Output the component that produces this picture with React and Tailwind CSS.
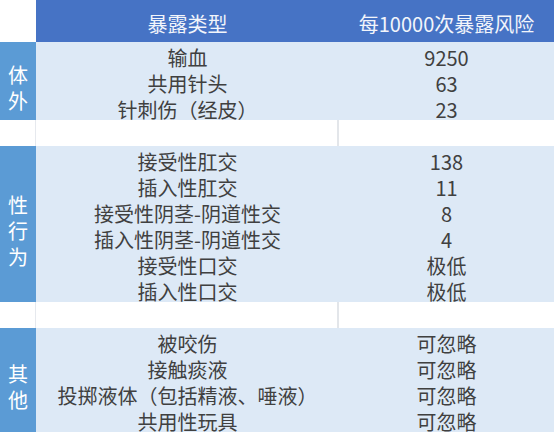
import React from 'react';

const sections = [
    {
        label: ['体', '外'],
        rows: [
            ['输血', '9250'],
            ['共用针头', '63'],
            ['针刺伤（经皮）', '23'],
        ],
    },
    {
        label: ['性', '行', '为'],
        rows: [
            ['接受性肛交', '138'],
            ['插入性肛交', '11'],
            ['接受性阴茎-阴道性交', '8'],
            ['插入性阴茎-阴道性交', '4'],
            ['接受性口交', '极低'],
            ['插入性口交', '极低'],
        ],
    },
    {
        label: ['其', '他'],
        rows: [
            ['被咬伤', '可忽略'],
            ['接触痰液', '可忽略'],
            ['投掷液体（包括精液、唾液）', '可忽略'],
            ['共用性玩具', '可忽略'],
        ],
    },
];

function Spacer() {
    return (
        <div className="flex h-[26px] bg-white">
            <div className="w-[36px] border-r border-[#e6e9ee]" />
            <div className="w-[303px] border-r-2 border-[#e3e6ea]" />
            <div className="flex-1" />
        </div>
    );
}

export default function App() {
    return (
        <div
            className="w-[554px] h-[432px] overflow-hidden bg-white text-[#404040]"
            style={{ fontFamily: '"Noto Sans CJK SC", "Noto Sans", sans-serif' }}
        >
            {/* 表头 */}
            <div className="flex h-[42px]">
                <div className="w-[36px] bg-white" />
                <div className="flex-1 flex items-center bg-[#4673c5] text-[#f2f5fb] text-[20px] leading-[22px] pt-[6px]">
                    <div className="w-[303px] text-center">暴露类型</div>
                    <div className="flex-1 text-center">每10000次暴露风险</div>
                </div>
            </div>

            {sections.map((section, i) => (
                <React.Fragment key={i}>
                    {i > 0 && <Spacer />}
                    <div className="flex">
                        <div className="w-[36px] bg-[#5b9bd5] text-white text-[20px] leading-[26px] flex flex-col items-center justify-center pt-[14px]">
                            {section.label.map((c) => (
                                <span key={c} className="block h-[26px]">{c}</span>
                            ))}
                        </div>
                        <div className="flex-1 bg-[#dde9f6] text-[20px]">
                            {section.rows.map(([name, risk]) => (
                                <div key={name} className="flex h-[26px] items-center leading-[20px] pt-[6px]">
                                    <div className="w-[303px] text-center whitespace-nowrap">{name}</div>
                                    <div className="flex-1 text-center">{risk}</div>
                                </div>
                            ))}
                        </div>
                    </div>
                </React.Fragment>
            ))}
        </div>
    );
}
